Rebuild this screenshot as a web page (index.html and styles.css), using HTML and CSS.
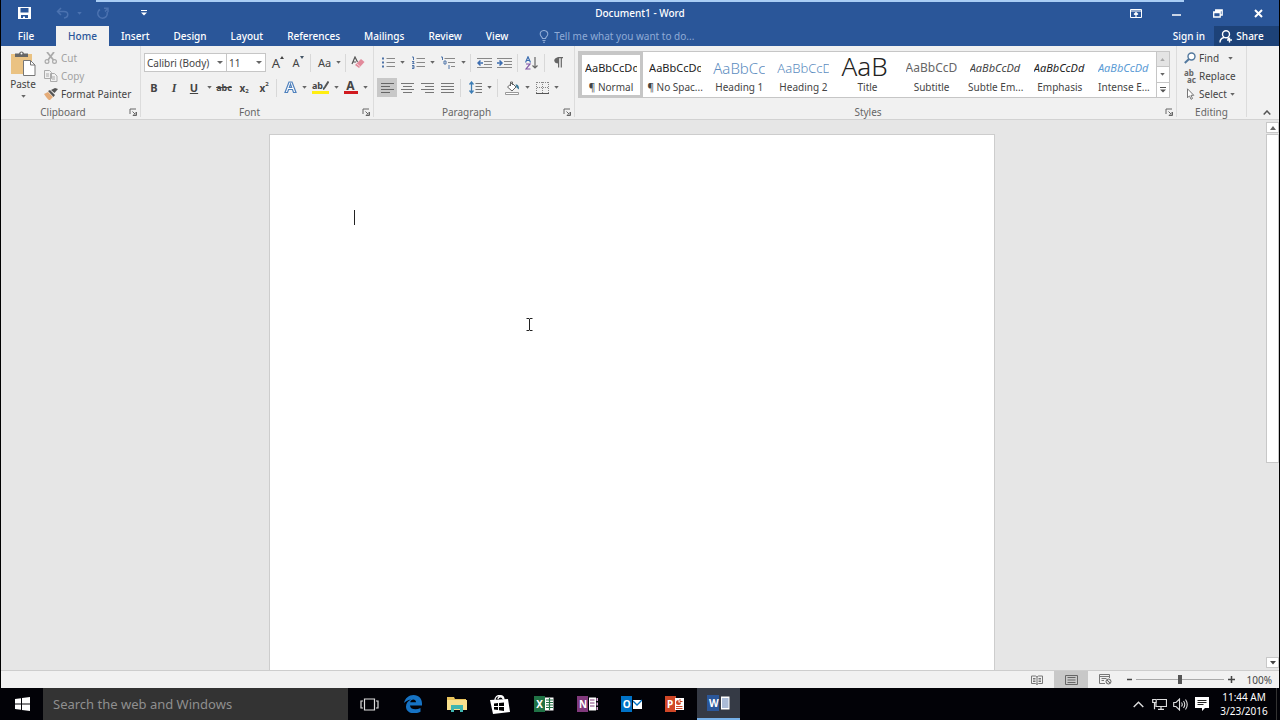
FILE: index.html
```html
<!DOCTYPE html>
<html lang="en">
<head>
<meta charset="utf-8">
<title>Document1 - Word</title>
<link rel="stylesheet" href="styles.css">
</head>
<body>
<svg class="defs" aria-hidden="true">
  <symbol id="down" viewBox="0 0 6 4"><path d="M0 0h6L3 3.500z" fill="currentColor"/></symbol>
  <symbol id="launch" viewBox="0 0 8 8"><path d="M1 6V1h6M3.500 3.500l3 3M7.500 4v3.500H4z" fill="none" stroke="currentColor"/></symbol>
</svg>
<div class="desktop">
<div class="window">
  <header class="titlebar">
    <div class="quick">
      <button class="q-save" aria-label="Save"><svg width="13" height="12" viewBox="0 0 13 12"><path d="M0 0h13v12H0z" fill="#fff"/><path d="M2.500 1h8v4.500h-8zM3 8h7v3H7V9.500H5V11H3z" fill="#2a5699"/></svg></button>
      <button class="q-undo" aria-label="Undo"><svg width="13" height="12" viewBox="0 0 13 12"><path d="M5 1L1.500 4.500 5 8M1.500 4.500H8c5 0 5 6 0 6.500" fill="none" stroke="#4b72b0" stroke-width="1.500"/></svg></button>
      <button class="q-menu" aria-label="Undo history"><svg width="5" height="3"><use href="#down"/></svg></button>
      <button class="q-redo" aria-label="Redo"><svg width="12" height="12" viewBox="0 0 12 12"><path d="M7 1.300h4v4M10.500 1.800L8 4.500M3 2.500a4.700 4.700 0 1 0 7 2.500" fill="none" stroke="#4b72b0" stroke-width="1.500"/></svg></button>
      <button class="q-custom" aria-label="Customize"><svg width="6" height="6" viewBox="0 0 6 6"><path d="M0 .5h6" stroke="#fff"/><path d="M0 2.500h6L3 5.500z" fill="#fff"/></svg></button>
    </div>
    <h1 class="doc-title">Document1 - Word</h1>
    <div class="controls">
      <button aria-label="Ribbon display options"><svg width="12" height="9" viewBox="0 0 12 9"><path d="M.5.500h11v8H.5zM.5 2h11" fill="none" stroke="#fff"/><path d="M6 8V4M4 5.500l2-2 2 2" fill="none" stroke="#fff" stroke-width="1.200"/></svg></button>
      <button aria-label="Minimize"><svg width="9" height="9" viewBox="0 0 9 9"><path d="M0 6h9" stroke="#fff" stroke-width="1.500"/></svg></button>
      <button aria-label="Restore"><svg width="10" height="9" viewBox="0 0 10 9"><path d="M.7 3h6.500v5H.7zM2.700 2.500V1h6.500v5H7.500M.7 3.700h6.500M2.700 1.500h6.500" fill="none" stroke="#fff" stroke-width="1.300"/></svg></button>
      <button aria-label="Close"><svg width="9" height="9" viewBox="0 0 9 9"><path d="M1 1l7 7M8 1L1 8" stroke="#fff" stroke-width="2"/></svg></button>
    </div>
  </header>

  <nav class="tabs">
    <button class="tab file">File</button>
    <button class="tab active">Home</button>
    <button class="tab">Insert</button>
    <button class="tab">Design</button>
    <button class="tab">Layout</button>
    <button class="tab">References</button>
    <button class="tab">Mailings</button>
    <button class="tab">Review</button>
    <button class="tab">View</button>
    <label class="tell"><svg width="10" height="13" viewBox="0 0 10 13"><path d="M3.500 8.500C3.500 7 1.200 6.500 1.200 4a3.800 3.500 0 0 1 7.600 0c0 2.500-2.300 3-2.300 4.500zM3.500 10.500h3M4 12.300h2" fill="none" stroke="#8fabd6" stroke-width="1.100"/></svg><input type="text" placeholder="Tell me what you want to do..." aria-label="Tell me what you want to do"></label>
    <button class="signin">Sign in</button>
    <button class="share"><svg width="14" height="13" viewBox="0 0 14 13"><circle cx="7" cy="4.300" r="3.500" fill="none" stroke="#fff" stroke-width="1.400"/><path d="M1 12.500c0-3 2-4.500 4-5M8.500 7.500L10 9M10.500 7.500v5M8 10h5" fill="none" stroke="#fff" stroke-width="1.400"/></svg>Share</button>
  </nav>

  <div class="ribbon">
    <section class="group clipboard">
      <div class="body clip-body">
        <button class="paste"><svg width="26" height="25" viewBox="0 0 26 25"><path d="M1 3h21v20H1z" fill="#eac282"/><path d="M5 2.500h4a2.600 2.600 0 0 1 5 0h4V6H5z" fill="#666"/><circle cx="11.500" cy="2.500" r="1" fill="#fff"/><path d="M13.500 9.500h7l4.500 4.500v10.500H13.500z" fill="#fff" stroke="#777"/><path d="M20.500 9.500V14H25" fill="none" stroke="#777"/></svg><span>Paste</span><svg class="arrow" width="5" height="3"><use href="#down"/></svg></button>
        <div class="clip-list">
          <button class="disabled"><svg width="14" height="12" viewBox="0 0 14 12"><path d="M3 0l6.500 8M10 0L4 8" stroke="#aaa" stroke-width="1.800"/><circle cx="3" cy="9.500" r="1.900" fill="none" stroke="#aaa" stroke-width="1.200"/><circle cx="10.500" cy="9.500" r="1.900" fill="none" stroke="#aaa" stroke-width="1.200"/></svg>Cut</button>
          <button class="disabled"><svg width="14" height="12" viewBox="0 0 14 12"><path d="M.5.500h5l2 2v6h-7zM6.500 3.500h4l2.500 2.500v5.500H6.500z" fill="#f1f1f1" stroke="#aaa"/><path d="M2 4h3M2 6h3M8 7h3M8 9h3" stroke="#aaa"/></svg>Copy</button>
          <button><svg width="14" height="12" viewBox="0 0 14 12"><path d="M0 6l4-2 5 5-3 3C4 12 3 10 0 6z" fill="#e5ac78"/><path d="M4 3l2-1 5 5-1.500 2zM7 2l4-2 3 1-3.500 4z" fill="#555"/></svg>Format Painter</button>
        </div>
      </div>
      <footer><span>Clipboard</span><button aria-label="Clipboard options"><svg width="8" height="8"><use href="#launch"/></svg></button></footer>
    </section>

    <section class="group font">
      <div class="body">
        <div class="row">
          <span class="drop family"><select aria-label="Font"><option>Calibri (Body)</option></select></span>
          <span class="drop size"><select aria-label="Font size"><option>11</option></select></span>
          <button class="ib first" aria-label="Grow font"><span class="ga">A</span><svg class="lift" width="4" height="3" viewBox="0 0 4 3"><path d="M2 0l2 3H0z" fill="#444"/></svg></button>
          <button class="ib" aria-label="Shrink font"><span class="gs">A</span><svg class="lift" width="4" height="3" viewBox="0 0 4 3"><path d="M0 0h4L2 3z" fill="#456"/></svg></button>
          <i class="sep"></i>
          <button class="split aa" aria-label="Change case">Aa<svg width="5" height="3"><use href="#down"/></svg></button>
          <i class="sep"></i>
          <button class="ib" aria-label="Clear formatting"><svg width="14" height="13" viewBox="0 0 14 13"><path d="M1 8L4 1l2.500 5M2 6h3" fill="none" stroke="#555" stroke-width="1.200"/><path d="M10 3l3.500 3L8 12 4 9z" fill="#e28a9b"/><path d="M5.500 7.500L9 10.500" stroke="#f5d5da"/></svg></button>
        </div>
        <div class="row">
          <button class="ib b">B</button>
          <button class="ib i">I</button>
          <button class="ib u">U</button>
          <button class="mini" aria-label="Underline style"><svg width="5" height="3"><use href="#down"/></svg></button>
          <button class="ib s">abc</button>
          <button class="ib x">x<sub>2</sub></button>
          <button class="ib x">x<sup>2</sup></button>
          <i class="sep"></i>
          <button class="split" aria-label="Text effects"><svg width="13" height="13" viewBox="0 0 13 13"><path d="M1 11.500L5 1h3l4 10.500H9.500l-1-3h-4l-1 3zM5.300 6.500h2.400L6.500 3z" fill="#fff" stroke="#4f81bd" stroke-width="1.200"/></svg><svg width="5" height="3"><use href="#down"/></svg></button>
          <button class="split" aria-label="Highlight colour"><span class="hl">ab<svg width="6" height="9" viewBox="0 0 6 9"><path d="M5.500.5L2 6 0 8.500" stroke="#555" stroke-width="2" fill="none"/></svg></span><svg width="5" height="3"><use href="#down"/></svg></button>
          <button class="split" aria-label="Font colour"><span class="fc">A</span><svg width="5" height="3"><use href="#down"/></svg></button>
        </div>
      </div>
      <footer><span>Font</span><button aria-label="Font options"><svg width="8" height="8"><use href="#launch"/></svg></button></footer>
    </section>

    <section class="group para">
      <div class="body">
        <div class="row">
          <button class="split" aria-label="Bullets"><svg width="13" height="13" viewBox="0 0 13 13"><path d="M0 2.500h2M0 6.500h2M0 10.500h2" stroke="#4f74a8" stroke-width="2"/><path d="M4.500 2.500H13M4.500 6.500H13M4.500 10.500H13" stroke="#888"/></svg><svg width="5" height="3"><use href="#down"/></svg></button>
          <button class="split" aria-label="Numbering"><svg width="13" height="13" viewBox="0 0 13 13"><path d="M0 1h1.500v3M0 5.500h2L.5 7.500H2.500M0 9.500h2v3H0M0 11h2" fill="none" stroke="#4f74a8"/><path d="M4.500 2.500H13M4.500 6.500H13M4.500 10.500H13" stroke="#888"/></svg><svg width="5" height="3"><use href="#down"/></svg></button>
          <button class="split" aria-label="Multilevel list"><svg width="15" height="13" viewBox="0 0 15 13"><path d="M0 1h1.500v3M3 5h2v3H3zM8 9v4" fill="none" stroke="#4f74a8"/><path d="M3.500 2.500H14M7 6.500h7M10 10.500h4" stroke="#888"/></svg><svg width="5" height="3"><use href="#down"/></svg></button>
          <i class="sep"></i>
          <button class="ib" aria-label="Decrease indent"><svg width="15" height="12" viewBox="0 0 15 12"><path d="M0 1.500h15M7 4.500h8M7 7.500h8M0 10.500h15" stroke="#888"/><path d="M6 6H1M3.500 3.500L1 6l2.500 2.500" stroke="#3c6db0" stroke-width="1.500" fill="none"/></svg></button>
          <button class="ib" aria-label="Increase indent"><svg width="15" height="12" viewBox="0 0 15 12"><path d="M0 1.500h15M7 4.500h8M7 7.500h8M0 10.500h15" stroke="#888"/><path d="M0 6h5M2.500 3.500L5 6 2.500 8.500" stroke="#3c6db0" stroke-width="1.500" fill="none"/></svg></button>
          <i class="sep"></i>
          <button class="ib" aria-label="Sort"><svg width="13" height="14" viewBox="0 0 13 14"><path d="M.5 6.500L3 .8l2.500 5.700M1.500 4.500h3" fill="none" stroke="#3c6db0" stroke-width="1.200"/><path d="M1 8h4L1 13h4.500" fill="none" stroke="#8054a5" stroke-width="1.200"/><path d="M10 1v11M7.500 9.500L10 12l2.500-2.500" fill="none" stroke="#666" stroke-width="1.200"/></svg></button>
          <i class="sep"></i>
          <button class="ib" aria-label="Show marks"><svg width="9" height="11" viewBox="0 0 9 11"><path d="M4.500 6.500C-1 6.500-1 .5 4 .5z" fill="#666"/><path d="M3.500.7H9M4.600.5V10.500M7.300.5V10.500" stroke="#666" stroke-width="1.200"/></svg></button>
        </div>
        <div class="row">
          <button class="ib on" aria-label="Align left"><svg width="13" height="12" viewBox="0 0 13 12"><path d="M0 1.500h13M0 4.500h9M0 7.500h13M0 10.500h9" stroke="#666"/></svg></button>
          <button class="ib" aria-label="Center"><svg width="13" height="12" viewBox="0 0 13 12"><path d="M0 1.500h13M2 4.500h9M0 7.500h13M2 10.500h9" stroke="#777"/></svg></button>
          <button class="ib" aria-label="Align right"><svg width="13" height="12" viewBox="0 0 13 12"><path d="M0 1.500h13M4 4.500h9M0 7.500h13M4 10.500h9" stroke="#777"/></svg></button>
          <button class="ib" aria-label="Justify"><svg width="13" height="12" viewBox="0 0 13 12"><path d="M0 1.500h13M0 4.500h13M0 7.500h13M0 10.500h13" stroke="#777"/></svg></button>
          <i class="sep"></i>
          <button class="split" aria-label="Line spacing"><svg width="13" height="13" viewBox="0 0 13 13"><path d="M2.500 1v11M.5 3.500l2-2.500 2 2.500M.5 9.500l2 2.500 2-2.500" fill="none" stroke="#3c7db5" stroke-width="1.300"/><path d="M6.500 2.500H13M6.500 5.500H13M6.500 8.500H13M6.500 11.500H13" stroke="#777"/></svg><svg width="5" height="3"><use href="#down"/></svg></button>
          <i class="sep"></i>
          <button class="split" aria-label="Shading"><svg width="15" height="14" viewBox="0 0 15 14"><path d="M2.500 6L7 2l4 4-4 4zM5.500 5V1h2v3" fill="#fff" stroke="#666"/><path d="M10.500 3.500c3 0 3.500 2 3.500 5l-2.500-2z" fill="#3c7a99"/><path d="M.5 11.500h13v2H.5z" fill="#fff" stroke="#999"/></svg><svg width="5" height="3"><use href="#down"/></svg></button>
          <button class="split" aria-label="Borders"><svg width="13" height="12" viewBox="0 0 13 12"><path d="M1 .5h11M1 5.500h11M.5 0v11M6.500 0v11M12.500 0v11" stroke="#888" stroke-dasharray="1 1"/><path d="M0 11.500h13" stroke="#555"/></svg><svg width="5" height="3"><use href="#down"/></svg></button>
        </div>
      </div>
      <footer><span>Paragraph</span><button aria-label="Paragraph options"><svg width="8" height="8"><use href="#launch"/></svg></button></footer>
    </section>

    <section class="group styles">
      <div class="body">
        <div class="gallery">
          <button class="style chosen"><span class="pv">AaBbCcDd</span><span class="nm">¶ Normal</span></button>
          <button class="style"><span class="pv">AaBbCcDd</span><span class="nm">¶ No Spac...</span></button>
          <button class="style"><span class="pv h1">AaBbCc</span><span class="nm">Heading 1</span></button>
          <button class="style"><span class="pv h2">AaBbCcD</span><span class="nm">Heading 2</span></button>
          <button class="style"><span class="pv ttl">AaB</span><span class="nm">Title</span></button>
          <button class="style"><span class="pv sub">AaBbCcD</span><span class="nm">Subtitle</span></button>
          <button class="style"><span class="pv sem">AaBbCcDd</span><span class="nm">Subtle Em...</span></button>
          <button class="style"><span class="pv em">AaBbCcDd</span><span class="nm">Emphasis</span></button>
          <button class="style"><span class="pv iem">AaBbCcDd</span><span class="nm">Intense E...</span></button>
          <div class="gal-scroll">
            <button class="off" aria-label="Previous styles"><svg width="5" height="3" viewBox="0 0 6 4"><path d="M0 4h6L3 0z" fill="#aaa"/></svg></button>
            <button aria-label="Next styles"><svg width="5" height="3"><use href="#down"/></svg></button>
            <button aria-label="More styles"><svg width="6" height="6" viewBox="0 0 6 6"><path d="M0 .5h6" stroke="#555"/><path d="M0 2.500h6L3 5.500z" fill="#555"/></svg></button>
          </div>
        </div>
      </div>
      <footer><span>Styles</span><button aria-label="Styles options"><svg width="8" height="8"><use href="#launch"/></svg></button></footer>
    </section>

    <section class="group editing">
      <div class="body edit-list">
        <button><svg width="12" height="12" viewBox="0 0 12 12"><circle cx="7.500" cy="4.500" r="3.500" fill="#fff" stroke="#52789e" stroke-width="1.400"/><path d="M5 7L.8 11" stroke="#52789e" stroke-width="2"/></svg>Find<svg class="far" width="5" height="3"><use href="#down"/></svg></button>
        <button><span class="abac"><span>ab</span><span class="ac">ac</span></span>Replace</button>
        <button><svg width="12" height="12" viewBox="0 0 12 12"><path d="M3.500.8v9l2-2 1.500 3.500 1.500-.8L7 7.300h2.800z" fill="#fff" stroke="#777"/></svg>Select<svg width="5" height="3"><use href="#down"/></svg></button>
      </div>
      <footer><span>Editing</span></footer>
    </section>
    <button class="collapse" aria-label="Collapse the ribbon"><svg width="8" height="5" viewBox="0 0 8 5"><path d="M.7 4.500L4 1l3.300 3.500" fill="none" stroke="#555" stroke-width="1.500"/></svg></button>
  </div>

  <main class="workspace">
    <div class="canvas">
      <div class="page" role="textbox" aria-label="Document" contenteditable="true"><i class="caret"></i></div>
      <svg class="ibeam" width="7" height="13" viewBox="0 0 7 13"><path d="M.5.500H3l.5.500.5-.500h2.500M3.500 1v11M.5 12.500H3l.5-.500.5.500h2.500" fill="none" stroke="#222"/></svg>
    </div>
    <div class="scroll">
      <button aria-label="Scroll up"><svg width="6" height="4" viewBox="0 0 6 4"><path d="M0 4h6L3 0z" fill="#666"/></svg></button>
      <div class="track"><div class="thumb"></div></div>
      <button aria-label="Scroll down"><svg width="6" height="4"><use href="#down"/></svg></button>
    </div>
  </main>

  <div class="status">
    <button aria-label="Read mode"><svg width="12" height="10" viewBox="0 0 12 10"><path d="M.5 1h4L6 2l1.500-1h4v7.500h-4L6 9.500 4.500 8.500h-4zM6 2v7.500M2 3.500h2.500M2 5h2.500M2 6.500h2.500M7.500 3.500H10M7.500 5H10M7.500 6.500H10" fill="none" stroke="#777"/></svg></button>
    <button class="on" aria-label="Print layout"><svg width="13" height="10" viewBox="0 0 13 10"><path d="M.5.500h12v9H.5zM2.500 2.500h8M2.500 5h8M2.500 7.500h8" fill="none" stroke="#666"/></svg></button>
    <button aria-label="Web layout"><svg width="13" height="11" viewBox="0 0 13 11"><path d="M6 9.500H.5v-9h10V4M.5 2.500h10M2.500 4.500h5M2.500 6.500H5" fill="none" stroke="#777"/><circle cx="9.500" cy="7.500" r="2.500" fill="#ddd" stroke="#666"/><path d="M8 6l3 3" stroke="#666"/></svg></button>
    <button class="zoom" aria-label="Zoom out"><svg width="7" height="7" viewBox="0 0 7 7"><path d="M1 3.500h5" stroke="#444" stroke-width="1.500"/></svg></button>
    <input class="slider" type="range" min="0" max="100" value="50" aria-label="Zoom">
    <button class="zoom" aria-label="Zoom in"><svg width="7" height="7" viewBox="0 0 7 7"><path d="M0 3.500h7M3.500 0v7" stroke="#444" stroke-width="1.500"/></svg></button>
    <button class="pct">100%</button>
  </div>
</div>

<div class="taskbar">
  <button class="start" aria-label="Start"><svg width="15" height="14" viewBox="0 0 15 14"><path d="M0 2l6-.8v5.300H0zM7 1l8-1v6.500H7zM0 7.500h6v5.300L0 12zM7 7.500h8V14l-8-1z" fill="#fff"/></svg></button>
  <input class="search" type="text" placeholder="Search the web and Windows" aria-label="Search the web and Windows">
  <div class="apps">
    <button aria-label="Task view"><svg width="19" height="13" viewBox="0 0 19 13"><path d="M4.500 1h10v11h-10zM3 3H1v7h2M16 3h2v7h-2" fill="none" stroke="#ddd" stroke-width="1.200"/></svg></button>
    <button aria-label="Edge"><svg width="18" height="18" viewBox="0 0 18 18"><path d="M0 8C1 3 5 0 9.500 0 15 0 18 4 18 8.500V10.500H6c.3 4 6 5 10.500 2.500v3.800C10 20 2 18 2 11.500 2 8 4 6 7 4.500 3.500 5 1.500 6.500 0 8zM6.200 7.300H12C12 3.500 6.800 3.500 6.200 7.300z" fill="#1673c4"/></svg></button>
    <button aria-label="File Explorer"><svg width="20" height="16" viewBox="0 0 20 16"><path d="M0 1h7l1 2h11v11H0z" fill="#e9c35c"/><path d="M0 4h20v10H0z" fill="#f8e08e"/><path d="M4 9h12v7h-3v-3H7v3H4z" fill="#3fb5b0"/></svg></button>
    <button aria-label="Store"><svg width="20" height="19" viewBox="0 0 20 19"><path d="M5 5c0-6 9-6 9 0M8 4c0-3 5-3 5 0" fill="none" stroke="#fff" stroke-width="1.300"/><path d="M0 5l18-1 2 13-17 2z" fill="#fff"/><path d="M4 8.500l4-.5v3H4zM9 8l5-.5V11H9zM4 12h4v3l-4-.5zM9 12h5v4l-5-.7z" fill="#000"/></svg></button>
    <button aria-label="Excel"><span class="office excel">X<svg width="9" height="14" viewBox="0 0 9 14"><path d="M0 .5h8.500v13H0z" fill="#fff"/><path d="M1 3h7M1 5.500h7M1 8h7M1 10.500h7M4.500 1v12" stroke="#207245" stroke-width="1.200"/></svg></span></button>
    <button aria-label="OneNote"><span class="office note">N<svg width="9" height="14" viewBox="0 0 9 14"><path d="M0 .5h7v13H0z" fill="#fff"/><path d="M1 3h4.500M1 6h4.500M1 9h4.500" stroke="#80397b"/><path d="M7.500 1h1.500v3H7.500zM7.500 5.500H9v3H7.500zM7.500 10H9v3H7.500z" fill="#d7a4d4"/></svg></span></button>
    <button aria-label="Outlook"><span class="office look">O<svg width="9" height="14" viewBox="0 0 9 14"><path d="M0 3h9v9H0z" fill="#fff"/><path d="M0 4l4 4 5-5" fill="none" stroke="#0072c6" stroke-width="1.300"/></svg></span></button>
    <button aria-label="PowerPoint"><span class="office point">P<svg width="9" height="14" viewBox="0 0 9 14"><path d="M0 1h9v12H0z" fill="#fff"/><path d="M3.500 3a2.500 2.500 0 1 0 2.500 2.500H3.500z" fill="#d04727"/><path d="M5 2v2.500h2.500M1 9.500h6.500M1 11.500h6.500" fill="none" stroke="#d04727"/></svg></span></button>
    <button class="running" aria-label="Word"><span class="office word">W<svg width="9" height="14" viewBox="0 0 9 14"><path d="M0 .5h8.500v13H0z" fill="#fff"/><path d="M1 3h6.500M1 5h6.500M1 7h6.500M1 9h6.500M1 11h6.500" stroke="#2b579a" stroke-width=".8"/></svg></span></button>
  </div>
  <div class="tray">
    <button aria-label="Show hidden icons"><svg width="11" height="7" viewBox="0 0 11 7"><path d="M.7 6L5.500 1.200 10.300 6" fill="none" stroke="#ddd" stroke-width="1.400"/></svg></button>
    <button aria-label="Network"><svg width="15" height="12" viewBox="0 0 15 12"><path d="M5 1.500h9.500v7H4V5M9 9v2M6 11.300h6M.7 1.500h3.500v3H.7zM2.500 4.500v6.800" fill="none" stroke="#ddd" stroke-width="1.200"/></svg></button>
    <button aria-label="Volume"><svg width="15" height="13" viewBox="0 0 15 13"><path d="M.7 4.500H3L6.500 1v11L3 8.500H.7zM8.500 4.500q1.500 2 0 4M10.500 3q2.500 3.500 0 7M12.500 1.500q3.500 5 0 10" fill="none" stroke="#ddd" stroke-width="1.100"/></svg></button>
    <button aria-label="Notifications"><svg width="14" height="14" viewBox="0 0 14 14"><path d="M0 0h14v11h-4l-3 3v-3H0z" fill="#fff"/><path d="M2.500 3.500h9M2.500 5.500h9M2.500 7.500h6" stroke="#222"/></svg></button>
    <button class="clock"><span>11:44 AM</span><span>3/23/2016</span></button>
  </div>
</div>
</div>
</body>
</html>
```

FILE: styles.css
```css
* { box-sizing: border-box; }
body {
  margin: 0;
  background: #000;
  color: #444;
  font: 10px/16px "Noto Sans", "Open Sans", sans-serif;
}
button, input, select { font: inherit; color: inherit; }
button {
  display: flex;
  align-items: center;
  justify-content: center;
  padding: 0;
  border: 0;
  background: none;
  white-space: nowrap;
}
svg { display: block; flex: none; }
.defs { position: absolute; width: 0; height: 0; }
.desktop { display: flex; flex-direction: column; height: 100vh; }
.window { flex: 1; min-height: 0; display: flex; flex-direction: column; margin: 0 1px; background: #f1f1f1; }

/* Title bar */
.titlebar {
  display: grid;
  grid-template-columns: 1fr auto 1fr;
  align-items: center;
  height: 26px;
  color: #fff;
  background: linear-gradient(#a9cdf5, #a9cdf5) 95px 0 / calc(100% - 190px) 2px no-repeat #2a5699;
}
.quick { display: flex; }
.quick button { height: 24px; }
.q-save { width: 46px; }
.q-undo { width: 30px; }
.q-menu { width: 4px; color: #4b72b0; }
.q-redo { width: 44px; }
.q-custom { width: 38px; }
.doc-title { margin: 0; font-size: 10px; font-weight: 500; }
.controls { display: flex; justify-content: flex-end; }
.controls button { width: 41px; height: 24px; }

/* Ribbon tabs */
.tabs { display: flex; height: 20px; background: #2a5699; color: #fff; font-weight: 500; }
.tab { padding: 0 12px; }
.file { width: 50px; margin-right: 5px; }
.active { width: 53px; background: #f1f1f1; color: #2a5699; }
.tell { flex: 1; display: flex; align-items: center; gap: 5px; padding-left: 19px; }
.tell input { flex: 1; min-width: 0; padding: 0; border: 0; outline: 0; background: none; font-weight: 400; }
.tell input::placeholder { color: #8fabd6; opacity: 1; }
.signin { padding: 0 9px; }
.share { width: 65px; gap: 3px; padding-right: 10px; background: #1d4278; }

/* Ribbon */
.ribbon { display: flex; height: 74px; border-bottom: 1px solid #d2d2d2; }
.group { display: flex; flex-direction: column; border-right: 1px solid #dcdcdc; padding: 3px 3px 0; margin-bottom: 2px; }
.body { flex: 1; min-height: 0; }
.ribbon svg { color: #666; }
.group footer { display: flex; align-items: center; height: 10px; line-height: 10px; color: #666; }
.group footer span { flex: 1; text-align: center; }
.group footer span:not(:last-child) { padding-right: 6px; }
.group footer button { width: 9px; height: 10px; }
.clipboard { width: 140px; }
.font { width: 233px; }
.para { width: 201px; }
.styles { flex: 1; min-width: 0; }
.editing { width: 70px; }
.clip-body { display: flex; gap: 2px; }
.paste { flex-direction: column; width: 38px; justify-content: flex-start; padding-top: 2px; }
.paste .arrow { margin-top: 3px; }
.clip-list, .edit-list { display: flex; flex-direction: column; align-items: flex-start; }
.clip-list button, .edit-list button { height: 18px; gap: 3px; }
.disabled { color: #a2a2a2; }
.row { display: flex; align-items: center; height: 25px; padding-top: 2px; }
.ib { width: 20px; height: 19px; }
.on { background: #c8c8c8; }
.split { width: 30px; height: 19px; gap: 5px; padding-left: 3px; }
.mini { width: 10px; height: 19px; }
.sep { width: 1px; height: 18px; margin: 0 2px; background: #d8d8d8; }
.para .sep { margin: 0 3px; }
.drop { position: relative; height: 19px; border: 1px solid #c6c6c6; background: #fff; }
.drop::after { content: ""; position: absolute; right: 3px; top: 7px; border: 3px solid transparent; border-top-color: #666; pointer-events: none; }
.drop select { display: block; appearance: none; width: 100%; height: 17px; padding: 0 2px; border: 0; background: none; outline: 0; line-height: 16px; }
.family { width: 83px; }
.size { width: 39px; border-left: 0; }
.first { margin-left: 2px; }
.ga { font-size: 13px; }
.gs, .aa { font-size: 11px; }
.lift { align-self: flex-start; margin-top: 3px; }
.b, .i, .u, .s, .x { font-weight: 700; }
.b, .u { font-size: 11px; }
.i { font-family: "Liberation Serif", serif; font-style: italic; font-size: 12px; }
.u { text-decoration: underline; }
.s { font-size: 9px; text-decoration: line-through; }
.x sub, .x sup { font-size: 6px; line-height: 6px; }
.x sub { align-self: flex-end; margin-bottom: 3px; }
.x sup { align-self: flex-start; margin-top: 3px; }
.hl { display: flex; height: 13px; border-bottom: 3px solid #ffee12; font-size: 9px; line-height: 9px; font-weight: 700; }
.fc { width: 14px; height: 13px; border-bottom: 3px solid #d11a1f; font-weight: 700; font-size: 12px; line-height: 10px; text-align: center; }

.gallery { display: flex; height: 47px; margin: 2px 3px 0 0; border: 1px solid #c6c6c6; background: #fff; }
.style { flex: 1; min-width: 0; flex-direction: column; justify-content: flex-end; padding: 0 6px; overflow: hidden; }
.chosen { padding: 0 3px; border: 3px solid #c6c6c6; border-bottom-width: 2px; }
.style .nm { margin-bottom: 2px; }
.chosen .nm { margin-bottom: 0; }
.pv { width: 100%; height: 22px; line-height: 22px; overflow: hidden; text-align: left; font-size: 11px; color: #222; }
.nm { height: 16px; line-height: 16px; }
.h1 { font-size: 15px; color: #5b8cc0; font-weight: 300; }
.h2 { font-size: 13px; color: #5b8cc0; font-weight: 300; }
.ttl { line-height: 18px; font-size: 26px; font-weight: 300; }
.sub { font-size: 12px; color: #666; }
.sem, .em, .iem { font-style: italic; }
.sem { color: #444; }
.iem { color: #5b9bd5; }
.gal-scroll { display: flex; flex-direction: column; width: 13px; border-left: 1px solid #c6c6c6; }
.gal-scroll button { flex: 1; }
.gal-scroll button + button { border-top: 1px solid #c6c6c6; }
.off { background: #e4e4e4; }
.edit-list { padding-left: 4px; }
.far { margin-left: 6px; }
.abac { display: flex; flex-direction: column; width: 12px; font-size: 8px; line-height: 7px; text-align: left; font-weight: 700; color: #666; }
.ac { text-align: right; }
.collapse { width: 32px; align-items: flex-end; padding: 0 0 4px 8px; }

/* Document */
.workspace { flex: 1; min-height: 0; display: flex; background: #e6e6e6; }
.canvas { position: relative; flex: 1; display: flex; justify-content: center; padding: 14px 4px 0 0; }
.page { width: 726px; padding: 75px 84px; border: 1px solid #cdcdcd; border-bottom: 0; background: #fff; outline: 0; }
.caret { display: block; width: 1px; height: 15px; background: #222; }
.ibeam { position: absolute; left: 525px; top: 198px; }
.scroll { display: flex; flex-direction: column; width: 13px; padding: 2px 0; }
.scroll button { height: 11px; border: 1px solid #c8c8c8; background: #fff; }
.track { flex: 1; padding-top: 1px; }
.thumb { height: 63%; border: 1px solid #c8c8c8; background: #fff; }

/* Status bar */
.status { display: flex; align-items: center; justify-content: flex-end; height: 18px; border-top: 1px solid #cdcdcd; padding-right: 7px; }
.status button { width: 34px; height: 17px; }
.status .zoom { width: 14px; }
.status .pct { width: 28px; margin-left: 6px; justify-content: flex-end; }
.slider { appearance: none; width: 88px; height: 9px; margin: 0; background: linear-gradient(#aaa, #aaa) 0 4px / 100% 1px no-repeat; }
.slider::-webkit-slider-thumb { appearance: none; width: 4px; height: 9px; background: #555; }

/* Taskbar */
.taskbar { display: flex; height: 32px; padding: 0 1px; background: #020207; color: #fff; }
.start { width: 42px; }
.search { width: 305px; padding: 0 10px; border: 0; outline: 0; background: #333; font-size: 13px; }
.search::placeholder { color: #8f8f8f; opacity: 1; }
.apps { display: flex; width: 392px; }
.apps button { flex: 1; }
.apps .running { background: #353a45; border-bottom: 2px solid #76b0e8; }
.office { display: flex; align-items: center; justify-content: center; gap: 2px; height: 16px; padding-left: 2px; font-size: 10px; font-weight: 700; color: #fff; }
.excel { background: linear-gradient(90deg, #207245 11px, transparent 11px); }
.note { background: linear-gradient(90deg, #80397b 11px, transparent 11px); }
.look { background: linear-gradient(90deg, #0072c6 11px, transparent 11px); }
.point { background: linear-gradient(90deg, #d04727 11px, transparent 11px); }
.word { background: linear-gradient(90deg, #2b579a 12px, transparent 12px); }
.tray { flex: 1; display: flex; justify-content: flex-end; padding-right: 2px; }
.tray button { width: 21px; }
.tray .clock { flex-direction: column; width: 65px; border-right: 1px solid #333; line-height: 14px; }
```
